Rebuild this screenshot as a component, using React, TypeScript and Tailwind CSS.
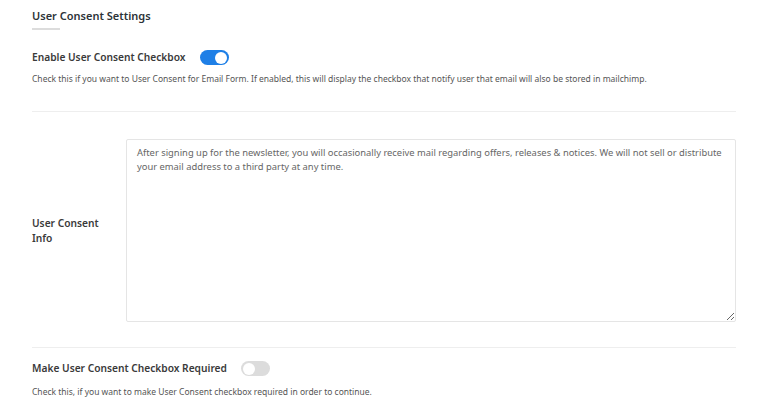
import React from "react";

function Toggle({ on }: { on: boolean }) {
  return on ? (
    <span className="inline-flex h-[15px] w-[29px] items-center justify-end rounded-full bg-[#1e7fe6] px-[2px]">
      <span className="h-[12px] w-[12px] rounded-full bg-white" />
    </span>
  ) : (
    <span className="inline-flex h-[15px] w-[29px] items-center justify-start rounded-full bg-[#dcdcdc] px-[2px]">
      <span className="h-[12px] w-[12px] rounded-full bg-white" />
    </span>
  );
}

export default function App() {
  return (
    <div className="min-h-[416px] w-[768px] bg-white px-[32px] pt-[7px] font-['Noto_Sans',sans-serif] text-[#3c434a]">
      <div className="w-[704px]">
        <h2 className="text-[11px] font-semibold leading-[18px] text-[#2c3338]">User Consent Settings</h2>
        <div className="mt-[3px] h-[2px] w-[28px] bg-[#dcdcdc]" />

        <div className="mt-[20px] flex items-center gap-[15px]">
          <span className="text-[10.2px] font-semibold text-[#3a3a3a]">Enable User Consent Checkbox</span>
          <Toggle on />
        </div>
        <p className="mt-[8px] text-[8.5px] leading-[12px] text-[#555]">
          Check this if you want to User Consent for Email Form. If enabled, this will display the checkbox that notify user that email will also be stored in mailchimp.
        </p>

        <div className="mt-[26px] h-px bg-[#eeeeee]" />

        <div className="mt-[27px] flex items-center">
          <div className="w-[94px] text-[10.2px] font-semibold leading-[15px] text-[#3a3a3a]">
            User Consent<br />Info
          </div>
          <textarea
            className="h-[183px] flex-1 resize-y rounded-[2px] border border-[#e5e5e5] bg-white px-[10px] py-[6px] text-[9.4px] leading-[14px] text-[#666] outline-none"
            defaultValue="After signing up for the newsletter, you will occasionally receive mail regarding offers, releases & notices. We will not sell or distribute your email address to a third party at any time."
          />
        </div>

        <div className="mt-[25px] h-px bg-[#eeeeee]" />

        <div className="mt-[13px] flex items-center gap-[14px]">
          <span className="text-[10.2px] font-semibold text-[#3a3a3a]">Make User Consent Checkbox Required</span>
          <Toggle on={false} />
        </div>
        <p className="mt-[9px] text-[8.5px] leading-[12px] text-[#555]">
          Check this, if you want to make User Consent checkbox required in order to continue.
        </p>
      </div>
    </div>
  );
}
